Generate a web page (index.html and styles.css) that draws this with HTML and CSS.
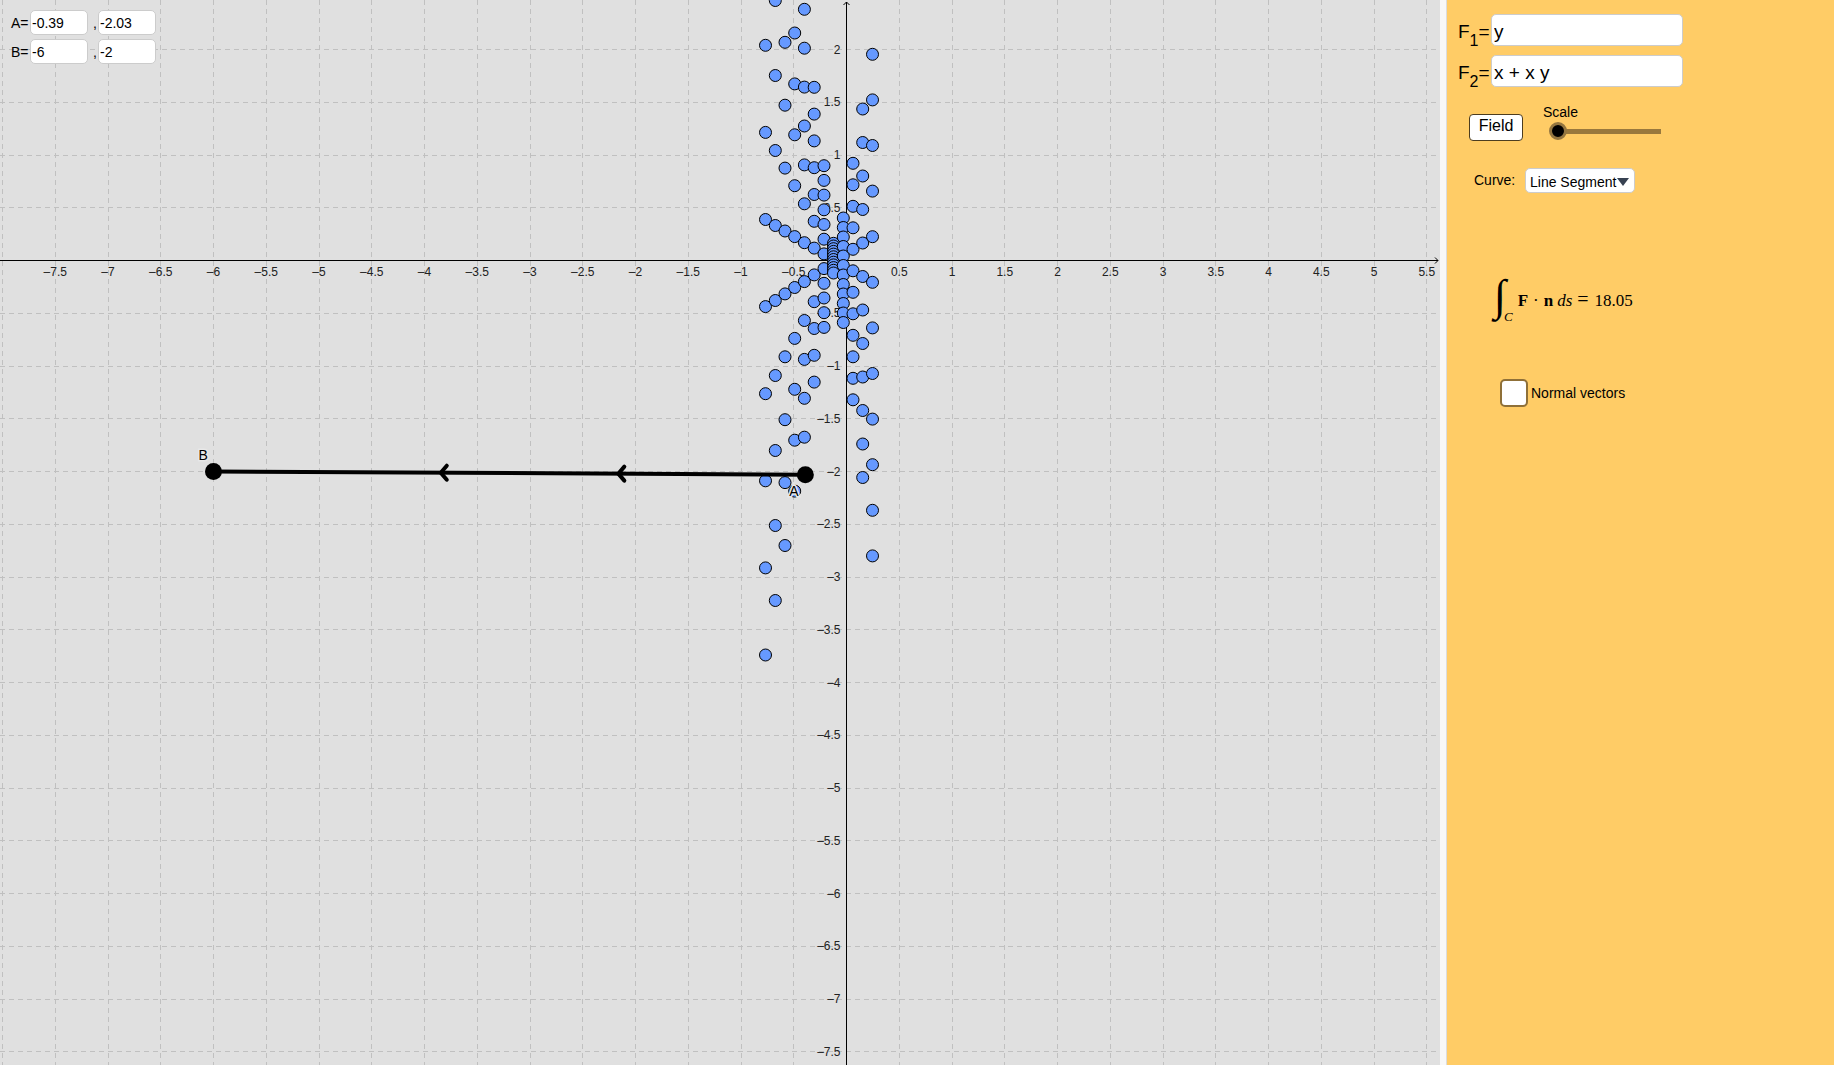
FILE: index.html
```html
<!DOCTYPE html>
<html lang="en">
<head>
    <meta charset="UTF-8">
    <meta name="viewport" content="width=device-width, initial-scale=1.0">
    <title>Flux across a curve</title>
    <link rel="stylesheet" href="styles.css">
</head>
<body>
    <main class="plot">
        <svg id="graph" class="graph" role="img" aria-label="Vector field and line segment from A to B"></svg>
        <form class="points">
            <div class="point-row">
                <label for="ax">A=</label>
                <input type="text" id="ax" value="-0.39">
                <label class="comma" for="ay">,</label>
                <input type="text" id="ay" value="-2.03">
            </div>
            <div class="point-row">
                <label for="bx">B=</label>
                <input type="text" id="bx" value="-6">
                <label class="comma" for="by">,</label>
                <input type="text" id="by" value="-2">
            </div>
        </form>
    </main>

    <aside class="panel">
        <div class="component">
            <label for="f1">F<sub>1</sub>=</label>
            <input type="text" id="f1" value="y">
        </div>
        <div class="component">
            <label for="f2">F<sub>2</sub>=</label>
            <input type="text" id="f2" value="x + x y">
        </div>
        <div class="field-row">
            <button type="button">Field</button>
            <div class="scale">
                <label for="scale">Scale</label>
                <input type="range" id="scale" min="0" max="1" step="0.01" value="0">
            </div>
        </div>
        <div class="curve-row">
            <label for="curve">Curve:</label>
            <div class="select-box">
                <select id="curve">
                    <option>Line Segment</option>
                    <option>Circle</option>
                </select>
            </div>
        </div>
        <div class="formula">
            <span class="integral">∫</span><i class="domain">C</i>
            <b>F</b><span class="dot">·</span><b>n</b><i class="ds">ds</i><span class="equals">=</span><span>18.05</span>
        </div>
        <div class="check-row">
            <input type="checkbox" id="normals">
            <label for="normals">Normal vectors</label>
        </div>
    </aside>

    <script src="graph.js"></script>
</body>
</html>
```

FILE: styles.css
```css
* {
    box-sizing: border-box;
}
body {
    display: flex;
    height: 100vh;
    margin: 0;
    padding: 0 2px 2px 0;
    background-color: #fff;
    color: #000;
    font-family: "Liberation Sans", Arial, sans-serif;
    font-size: 14px;
}
input, select, button {
    font-family: inherit;
    color: inherit;
}
input[type="text"], select {
    border: 1px solid #ccc;
    border-radius: 5px;
    background-color: #fff;
}

/* graph */
.plot {
    position: relative;
    flex: 1;
    min-width: 0;
    background-color: #e0e0e0;
}
.graph {
    display: block;
    width: 100%;
    height: 100%;
}
.grid {
    stroke: #c0c0c0;
    stroke-dasharray: 5 4;
}
.axis {
    stroke: #000;
    fill: none;
}
.tick {
    font-size: 12px;
    fill: #222;
}
.sample {
    fill: #6699ff;
    stroke: #000;
}
.segment {
    fill: none;
    stroke: #000;
    stroke-width: 4;
    stroke-linecap: round;
}
.name {
    fill: #000;
    stroke: #e8e8e8;
    stroke-width: 3;
    paint-order: stroke;
}
.points {
    position: absolute;
    top: 10px;
    left: 11px;
    display: flex;
    flex-direction: column;
    gap: 4px;
}
.point-row {
    display: flex;
    align-items: center;
}
.point-row label {
    width: 19px;
}
.point-row .comma {
    width: 10px;
    padding-left: 5px;
}
.point-row input {
    width: 58px;
    height: 25px;
    padding: 0 1px;
    font-size: 14px;
}

/* control panel */
.panel {
    width: 394px;
    padding: 14px 12px 0;
    border-left: 6px solid #f8f8f8;
    background-color: #ffcc66;
    box-shadow: inset 1px 0 #dcdcdc;
}
.component {
    display: flex;
    align-items: baseline;
    margin-bottom: 9px;
    font-size: 19px;
}
.component label {
    width: 33px;
    line-height: 24px;
    white-space: nowrap;
}
.component sub {
    font-size: 16px;
    line-height: 0;
    vertical-align: -8px;
}
.component input {
    width: 192px;
    height: 32px;
    padding: 4px 2px 0;
    font-size: 19px;
}
.field-row {
    display: flex;
    align-items: flex-end;
    gap: 20px;
    margin: 17px 0 0 11px;
}
.field-row button {
    width: 54px;
    height: 27px;
    padding: 0 0 3px;
    border: 1px solid #4d3d1f;
    border-radius: 4px;
    background-color: #fff;
    font-size: 16px;
}
.scale {
    display: flex;
    flex-direction: column;
    gap: 2px;
}
.scale input {
    -webkit-appearance: none;
    appearance: none;
    width: 112px;
    height: 18px;
    margin: 0 0 1px 6px;
    background: linear-gradient(#99783d, #99783d) 4px 7px / 108px 5px no-repeat;
}
.scale input::-webkit-slider-thumb {
    -webkit-appearance: none;
    width: 18px;
    height: 18px;
    border: 3px solid #947640;
    border-radius: 50%;
    background-color: #000;
}
.curve-row {
    display: flex;
    align-items: center;
    gap: 10px;
    margin: 27px 0 0 16px;
}
.curve-row label {
    width: 41px;
    padding-bottom: 2px;
}
.select-box {
    position: relative;
}
.select-box::after {
    content: "";
    position: absolute;
    top: 10px;
    right: 6px;
    border: 6px solid transparent;
    border-top: 8px solid #374151;
    border-bottom: 0;
    pointer-events: none;
}
.select-box select {
    -webkit-appearance: none;
    appearance: none;
    width: 110px;
    height: 25px;
    padding: 2px 0 0 4px;
    font-size: 14px;
}
.formula {
    display: flex;
    align-items: baseline;
    height: 40px;
    margin: 94px 0 0 36px;
    font-family: "Liberation Serif", "Times New Roman", serif;
    font-size: 17px;
    line-height: 24px;
}
.integral {
    position: relative;
    top: 4px;
    width: 10px;
    font-size: 44px;
    line-height: 0;
}
.domain {
    position: relative;
    top: 15px;
    margin-right: 5px;
    font-size: 13px;
}
.dot {
    margin: 0 5px;
}
.ds {
    margin: 0 5px 0 4px;
}
.equals {
    margin-right: 6px;
    font-size: 20px;
}
.check-row {
    display: flex;
    align-items: center;
    gap: 3px;
    margin: 52px 0 0 42px;
}
.check-row input {
    -webkit-appearance: none;
    appearance: none;
    width: 28px;
    height: 28px;
    margin: 0;
    border: 2px solid #8f7038;
    border-radius: 5px;
    background-color: #fff;
}
```

FILE: graph.js
```javascript
const graph = document.getElementById('graph');
const unit = 105.5;
const origin = { x: 846.5, y: 260.5 };

// sample points: one column per x, evenly spaced going down
const columns = [
    { x: 765.5, top: 45.3, step: 87.1, count: 8 },
    { x: 775.3, top: 0.5, step: 75, count: 9 },
    { x: 785, top: 42.3, step: 62.9, count: 9 },
    { x: 794.7, top: 33, step: 50.9, count: 10 },
    { x: 804.4, top: 9.3, step: 38.9, count: 12 },
    { x: 814.2, top: 87.3, step: 26.8, count: 12 },
    { x: 824, top: 165.7, step: 14.7, count: 12 },
    { x: 833.5, top: 243.3, step: 2.7, count: 12 },
    { x: 843.3, top: 218, step: 9.5, count: 12 },
    { x: 853, top: 163.3, step: 21.5, count: 12 },
    { x: 862.7, top: 109, step: 33.5, count: 12 },
    { x: 872.5, top: 54.3, step: 45.6, count: 12 }
];

function add(tag, attrs, text) {
    const el = document.createElementNS('http://www.w3.org/2000/svg', tag);
    for (const key in attrs) {
        el.setAttribute(key, attrs[key]);
    }
    if (text) {
        el.textContent = text;
    }
    graph.appendChild(el);
}

function toX(x) {
    return origin.x + x * unit;
}

function toY(y) {
    return origin.y - y * unit;
}

function snap(v) {
    return Math.floor(v) + 0.5;
}

function tickLabel(v) {
    return String(v).replace('-', '–');
}

function drawGrid(w, h) {
    for (let v = -8; toX(v) < w; v += 0.5) {
        const x = snap(toX(v));
        if (v !== 0) add('path', { class: 'grid', d: `M${x} 0V${h}` });
    }
    for (let v = 2; toY(v) < h; v -= 0.5) {
        const y = snap(toY(v));
        if (v !== 0) add('path', { class: 'grid', d: `M0 ${y}H${w - 3}` });
    }
}

function drawAxes(w, h) {
    const { x, y } = origin;
    add('path', { class: 'axis', d: `M0 ${y}H${w - 2}M${w - 5} ${y - 3}L${w - 2} ${y}L${w - 5} ${y + 3}` });
    add('path', { class: 'axis', d: `M${x} ${h}V2M${x - 3} 5L${x} 2L${x + 3} 5` });
    for (let v = -7.5; toX(v) < w; v += 0.5) {
        if (v !== 0) add('text', { class: 'tick', x: toX(v), y: y + 15, 'text-anchor': 'middle' }, tickLabel(v));
    }
    for (let v = 2; toY(v) < h; v -= 0.5) {
        if (v !== 0) add('text', { class: 'tick', x: x - 6, y: Math.round(toY(v)) + 4, 'text-anchor': 'end' }, tickLabel(v));
    }
}

function drawSamples() {
    columns.forEach(col => {
        for (let i = 0; i < col.count; i++) {
            add('circle', { class: 'sample', cx: col.x, cy: col.top + i * col.step, r: 6 });
        }
    });
}

function drawSegment() {
    const a = { x: toX(-0.39), y: toY(-2.03) };
    const b = { x: toX(-6), y: toY(-2) };
    add('path', { class: 'segment', d: `M${a.x} ${a.y}L${b.x} ${b.y}` });
    // direction arrows
    [0.316, 0.616].forEach(t => {
        const x = a.x + (b.x - a.x) * t;
        const y = a.y + (b.y - a.y) * t;
        add('path', { class: 'segment', d: `M${x + 6} ${y - 7}L${x} ${y}L${x + 6} ${y + 7}` });
    });
    add('circle', { cx: a.x, cy: a.y, r: 8.5 });
    add('circle', { cx: b.x, cy: b.y, r: 8.5 });
    add('text', { class: 'name', x: a.x - 16, y: a.y + 21 }, 'A');
    add('text', { class: 'name', x: b.x - 15, y: b.y - 12 }, 'B');
}

function draw() {
    const w = graph.clientWidth;
    const h = graph.clientHeight;
    graph.innerHTML = '';
    drawGrid(w, h);
    drawAxes(w, h);
    drawSamples();
    drawSegment();
}

window.addEventListener('resize', draw);
draw();
```
